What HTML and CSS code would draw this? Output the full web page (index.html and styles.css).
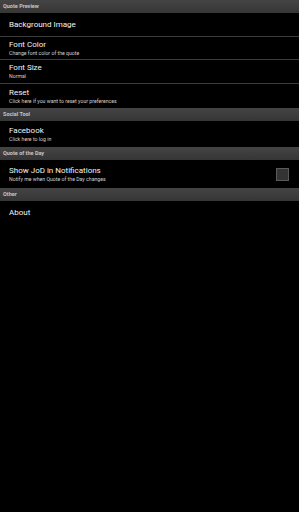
FILE: index.html
```html
<!DOCTYPE html>
<html lang="en">
<head>
    <meta charset="UTF-8">
    <meta name="viewport" content="width=device-width, initial-scale=1.0">
    <title>Settings</title>
    <link rel="stylesheet" href="styles.css">
</head>
<body>
    <div class="settings">
        <div class="group-header">Quote Preview</div>
        <div class="pref">
            <div class="pref-title">Background Image</div>
        </div>
        <div class="pref compact">
            <div class="pref-title">Font Color</div>
            <div class="pref-summary">Change font color of the quote</div>
        </div>
        <div class="pref">
            <div class="pref-title">Font Size</div>
            <div class="pref-summary">Normal</div>
        </div>
        <div class="pref last">
            <div class="pref-title">Reset</div>
            <div class="pref-summary">Click here if you want to reset your preferences</div>
        </div>

        <div class="group-header">Social Tool</div>
        <div class="pref last tall">
            <div class="pref-title">Facebook</div>
            <div class="pref-summary">Click here to log in</div>
        </div>

        <div class="group-header">Quote of the Day</div>
        <div class="pref last taller with-check">
            <div class="pref-text">
                <div class="pref-title">Show JoD in Notifications</div>
                <div class="pref-summary">Notify me when Quote of the Day changes</div>
            </div>
            <span class="checkbox"></span>
        </div>

        <div class="group-header">Other</div>
        <div class="pref last">
            <div class="pref-title">About</div>
        </div>
    </div>
</body>
</html>
```

FILE: styles.css
```css
/* Android style preference screen */
body {
    margin: 0;
    background-color: #000;
    font-family: Roboto, "Noto Sans", Arial, sans-serif;
    color: #fff;
}
.settings {
    width: 299px;
    height: 512px;
    background-color: #000;
}
.group-header {
    height: 13px;
    line-height: 13px;
    padding-left: 3px;
    background: linear-gradient(#444, #363636);
    color: #c4c4c4;
    font-size: 5.5px;
    font-weight: bold;
}
.pref {
    box-sizing: border-box;
    height: 24px;
    padding-left: 9px;
    padding-right: 9px;
    border-bottom: 1px solid #3a3a3a;
    display: flex;
    flex-direction: column;
    justify-content: center;
}
.pref.compact {
    height: 23px;
}
.pref.last {
    border-bottom: none;
}
.pref.tall {
    height: 26px;
}
.pref.taller {
    height: 28px;
}
.pref.with-check {
    flex-direction: row;
    align-items: center;
    justify-content: space-between;
}
.pref-title {
    font-size: 8px;
    line-height: 10px;
    color: #f4f4f4;
}
.pref-summary {
    font-size: 5.2px;
    line-height: 7px;
    color: #d0d0d0;
}
.checkbox {
    width: 11px;
    height: 11px;
    margin-right: 1px;
    border: 1px solid #5a5a5a;
    background-color: #333;
}
```
